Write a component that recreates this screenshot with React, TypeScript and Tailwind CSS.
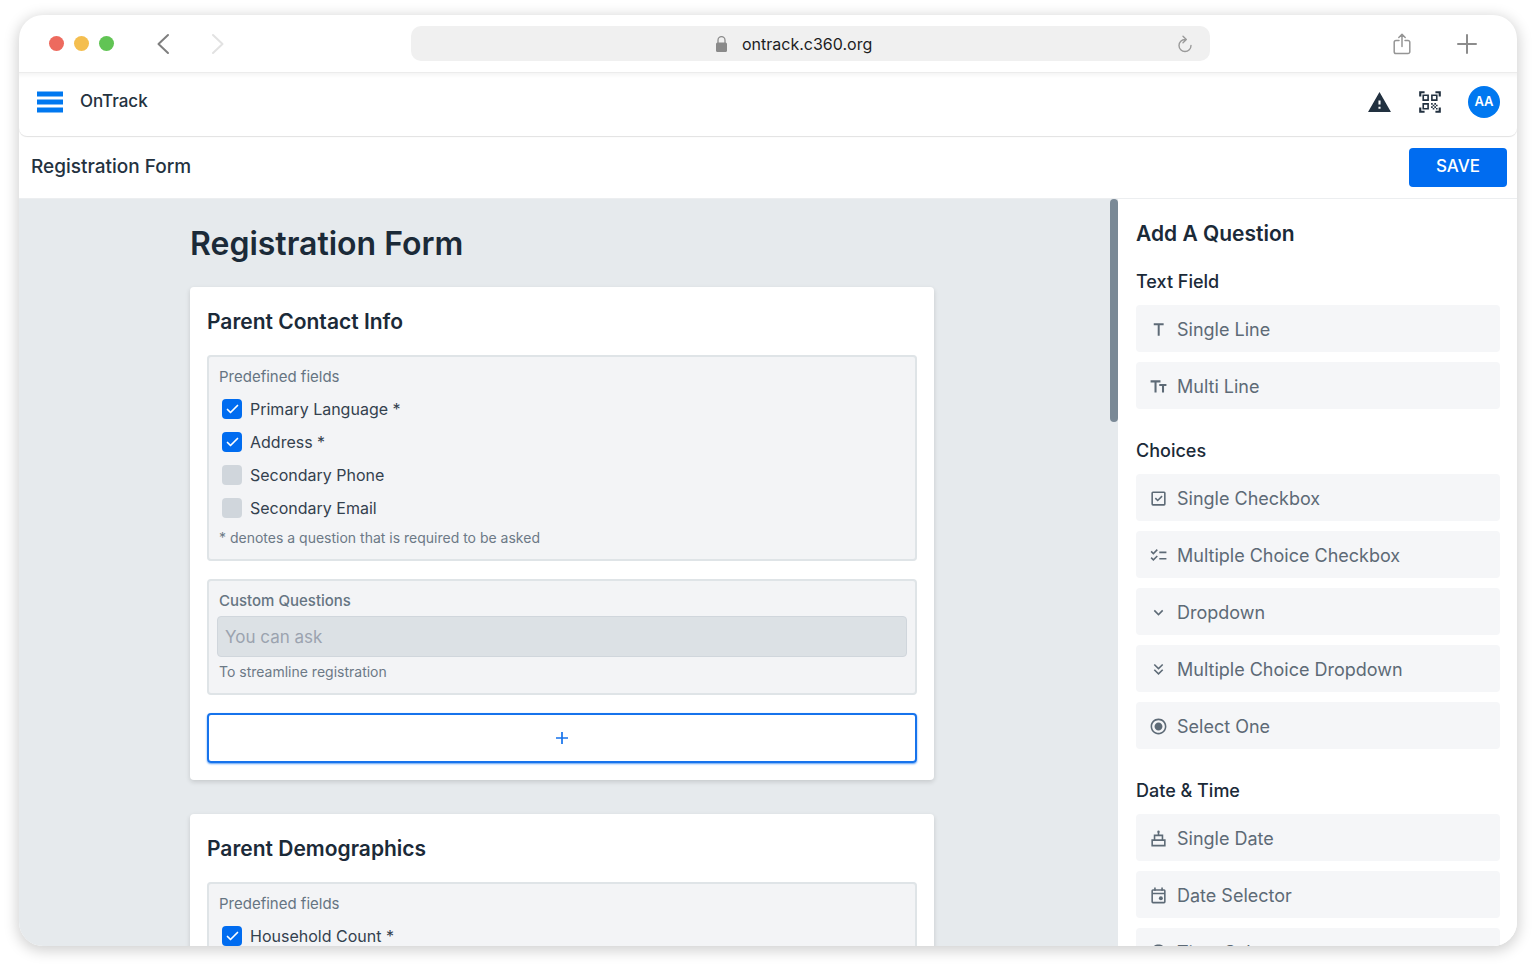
import React, { useState } from 'react';
import {
  MdAccessTime,
  MdChecklist,
  MdExpandMore,
  MdKeyboardDoubleArrowDown,
  MdOutlineQrCodeScanner,
  MdRadioButtonChecked,
  MdWarning,
} from 'react-icons/md';

type IconProps = { className?: string };

const TextIcon: React.FC<IconProps> = ({ className }) => (
  <svg viewBox="0 0 24 24" fill="none" stroke="currentColor" strokeWidth="2.500" className={className} aria-hidden="true">
    <path d="M6 5.500h12.500M12.250 5.500V20" />
  </svg>
);

const TextSizeIcon: React.FC<IconProps> = ({ className }) => (
  <svg viewBox="0 0 24 24" fill="none" stroke="currentColor" strokeWidth="2.600" className={className} aria-hidden="true">
    <path d="M2 5.500h12.500M8.250 5.500V19.500M13 10.200h9M17.700 10.200v9.300" />
  </svg>
);

const CheckboxIcon: React.FC<IconProps> = ({ className }) => (
  <svg viewBox="0 0 24 24" fill="none" stroke="currentColor" strokeWidth="2" className={className} aria-hidden="true">
    <rect x="4" y="4" width="16" height="16" rx="1" />
    <path d="M8 11.500l3 3 5.500-5.500" />
  </svg>
);

const CakeIcon: React.FC<IconProps> = ({ className }) => (
  <svg viewBox="0 0 24 24" fill="none" stroke="currentColor" strokeWidth="2" className={className} aria-hidden="true">
    <path d="M12 3v5M7 14V8h10v6M4 21v-7h16v7z" />
    <circle cx="12" cy="3.500" r="1.500" fill="currentColor" stroke="none" />
  </svg>
);

const CalendarIcon: React.FC<IconProps> = ({ className }) => (
  <svg viewBox="0 0 24 24" fill="none" stroke="currentColor" strokeWidth="2" className={className} aria-hidden="true">
    <rect x="4" y="5" width="16" height="16" rx="1" />
    <path d="M4 9.500h16M7.500 2v4M16.500 2v4" />
    <circle cx="15" cy="15.500" r="2.500" fill="currentColor" stroke="none" />
  </svg>
);

interface Field {
  label: string;
  checked: boolean;
}

const contactFields: Field[] = [
  { label: 'Primary Language *', checked: true },
  { label: 'Address *', checked: true },
  { label: 'Secondary Phone', checked: false },
  { label: 'Secondary Email', checked: false },
];

const demographicFields: Field[] = [{ label: 'Household Count *', checked: true }];

const questionGroups = [
  {
    title: 'Text Field',
    items: [
      { label: 'Single Line', Icon: TextIcon },
      { label: 'Multi Line', Icon: TextSizeIcon },
    ],
  },
  {
    title: 'Choices',
    items: [
      { label: 'Single Checkbox', Icon: CheckboxIcon },
      { label: 'Multiple Choice Checkbox', Icon: MdChecklist },
      { label: 'Dropdown', Icon: MdExpandMore },
      { label: 'Multiple Choice Dropdown', Icon: MdKeyboardDoubleArrowDown },
      { label: 'Select One', Icon: MdRadioButtonChecked },
    ],
  },
  {
    title: 'Date & Time',
    items: [
      { label: 'Single Date', Icon: CakeIcon },
      { label: 'Date Selector', Icon: CalendarIcon },
      { label: 'Time Selector', Icon: MdAccessTime },
    ],
  },
];

const BrowserBar: React.FC = () => (
  <div className="flex h-[57px] shrink-0 items-center">
    <div className="flex w-[392px] shrink-0 items-center pl-[30px]">
      <div className="flex gap-[10px]">
        <span className="size-[15px] rounded-full bg-[#ed6a5e]" />
        <span className="size-[15px] rounded-full bg-[#f4be4f]" />
        <span className="size-[15px] rounded-full bg-[#61c454]" />
      </div>
      <button aria-label="Back" className="ml-[42px] text-[#7f7f7f]">
        <svg width="14" height="22" viewBox="0 0 14 22" fill="none" stroke="currentColor" strokeWidth="2" strokeLinecap="round" strokeLinejoin="round">
          <path d="M12 2L2.500 11l9.500 9" />
        </svg>
      </button>
      <button aria-label="Forward" className="ml-[41px] text-[#e2e2e2]">
        <svg width="14" height="22" viewBox="0 0 14 22" fill="none" stroke="currentColor" strokeWidth="2" strokeLinecap="round" strokeLinejoin="round">
          <path d="M2 2l9.500 9L2 20" />
        </svg>
      </button>
    </div>
    <div className="flex h-[35px] flex-1 items-center rounded-[10px] bg-[#f0f0f0] pr-[17px] pl-[304px]">
      <svg width="13" height="18" viewBox="0 0 13 18" className="shrink-0 text-[#8a8a8a]" aria-hidden="true">
        <rect x="1" y="7.500" width="11" height="9.500" rx="1.500" fill="currentColor" />
        <path d="M3 8.500V5.200a3.500 3.500 0 0 1 7 0v3.300" fill="none" stroke="currentColor" strokeWidth="1.300" />
      </svg>
      <input
        aria-label="Address"
        defaultValue="ontrack.c360.org"
        className="ml-[14px] min-w-0 flex-1 bg-transparent text-base text-[#1d1d1f] outline-none"
      />
      <button aria-label="Reload" className="text-[#9a9a9a]">
        <svg width="16" height="18" viewBox="0 0 16 18" fill="none" stroke="currentColor" strokeWidth="1.400" strokeLinecap="round" strokeLinejoin="round">
          <path d="M8.500 4.500H8a6 6 0 1 0 6 6M6 1.300l3.300 3.200L6 7.700" />
        </svg>
      </button>
    </div>
    <div className="flex w-[307px] shrink-0 items-center justify-end pr-[40px]">
      <button aria-label="Share" className="mr-[45px] text-[#959595]">
        <svg width="20" height="22" viewBox="0 0 20 22" fill="none" stroke="currentColor" strokeWidth="1.500" strokeLinecap="round" strokeLinejoin="round">
          <path d="M7 7.500H4A1.800 1.800 0 0 0 2.200 9.300v9.400A1.800 1.800 0 0 0 4 20.500h12a1.800 1.800 0 0 0 1.800-1.800V9.300A1.800 1.800 0 0 0 16 7.500h-3M10 13.500V1.500M6.800 4.500L10 1.300l3.200 3.200" />
        </svg>
      </button>
      <button aria-label="New tab" className="text-[#8c8c8c]">
        <svg width="20" height="20" viewBox="0 0 20 20" fill="none" stroke="currentColor" strokeWidth="2" strokeLinecap="round">
          <path d="M10 1v18M1 10h18" />
        </svg>
      </button>
    </div>
  </div>
);

const AppHeader: React.FC = () => (
  <header className="flex h-16 shrink-0 items-center rounded-b-lg border-t border-[#ececec] pr-[17px] pb-[5px] pl-[18px] shadow-[0_1px_1px_rgba(0,0,0,0.12),inset_0_5px_4px_-3px_rgba(0,0,0,0.05)]">
    <button aria-label="Menu" className="text-[#0078f0]">
      <svg width="26" height="22" viewBox="0 0 26 22" fill="currentColor">
        <path d="M0 .500h26v5H0zM0 8.500h26v5H0zM0 16.500h26v5H0z" />
      </svg>
    </button>
    <span className="ml-[17px] flex-1 text-[17px] font-medium text-[#24323f]">OnTrack</span>
    <button aria-label="Alerts" className="text-[#223140]">
      <MdWarning size={25} />
    </button>
    <button aria-label="Scan code" className="ml-[25px] text-[#223140]">
      <MdOutlineQrCodeScanner size={26} />
    </button>
    <button className="ml-[25px] size-8 rounded-full bg-[#0078f0] text-[13px] font-semibold text-white">AA</button>
  </header>
);

const CheckField: React.FC<{ field: Field }> = ({ field }) => (
  <label className="flex h-[33px] items-center gap-2 pl-[5px] text-base text-[#33414e]">
    <span className="grid">
      <input
        type="checkbox"
        defaultChecked={field.checked}
        className="peer col-start-1 row-start-1 size-5 appearance-none rounded bg-[#d0d6dc] checked:bg-[#006cf0]"
      />
      <svg
        viewBox="0 0 20 20"
        fill="none"
        stroke="currentColor"
        strokeWidth="1.700"
        strokeLinecap="round"
        strokeLinejoin="round"
        className="pointer-events-none col-start-1 row-start-1 hidden size-5 text-white peer-checked:block"
      >
        <path d="M5.500 10.500l3 3L15.500 6.500" />
      </svg>
    </span>
    {field.label}
  </label>
);

const PredefinedFields: React.FC<{ fields: Field[] }> = ({ fields }) => (
  <fieldset className="rounded border-2 border-[#dfe4e7] bg-[#f3f4f6] px-2 pt-[9px] pb-[10px]">
    <div className="px-[2px] text-[15px] leading-[22px] text-[#667482]">Predefined fields</div>
    <div className="mt-1 mb-[3px]">
      {fields.map((field) => (
        <CheckField key={field.label} field={field} />
      ))}
    </div>
    <p className="px-[2px] text-sm leading-[22px] text-[#6c7986]">
      * denotes a question that is required to be asked
    </p>
  </fieldset>
);

const FormCard: React.FC<{ title: string; fields: Field[] }> = ({ title, fields }) => {
  const [question, setQuestion] = useState('');

  return (
    <section className="rounded bg-white px-[17px] pt-[19px] pb-[17px] shadow-[0_2px_5px_rgba(0,0,0,0.14)]">
      <h2 className="mb-[17px] text-[21px] leading-8 font-semibold text-[#1b2a38]">{title}</h2>
      <PredefinedFields fields={fields} />

      {/* Custom questions */}
      <div className="mt-[18px] rounded border-2 border-[#dfe4e7] bg-[#f3f4f6] px-2 pt-[9px] pb-[10px]">
        <label className="block px-[2px] text-[15px] leading-[22px] font-medium text-[#667482]">
          Custom Questions
          <input
            value={question}
            onChange={(e) => setQuestion(e.target.value)}
            placeholder="You can ask"
            className="-mx-[2px] mt-1 block h-[41px] w-[calc(100%+4px)] rounded border border-[#d0d6dc] bg-[#dce1e5] px-[7px] text-[17px] font-normal placeholder:text-[#9ba3af]"
          />
        </label>
        <p className="mt-1 px-[2px] text-sm leading-[22px] text-[#6c7986]">To streamline registration</p>
      </div>

      <button
        aria-label="Add question"
        className="mt-[18px] flex h-[50px] w-full items-center justify-center rounded border-2 border-[#1673ec] text-[#1673ec] shadow-[0_1px_2px_#5b9ff5]"
      >
        <svg width="14" height="14" viewBox="0 0 14 14" fill="none" stroke="currentColor" strokeWidth="1.700">
          <path d="M7 1v12M1 7h12" />
        </svg>
      </button>
    </section>
  );
};

const QuestionPanel: React.FC = () => (
  <aside className="w-[399px] shrink-0 overflow-hidden bg-white pt-[19px] pr-[17px] pl-[18px]">
    <h2 className="mb-[18px] text-[21px] leading-8 font-semibold text-[#1b2a38]">Add A Question</h2>
    <div className="flex flex-col gap-7">
      {questionGroups.map((group) => (
        <section key={group.title}>
          <h3 className="mb-[9px] text-lg leading-7 font-medium text-[#1b2a38]">{group.title}</h3>
          <div className="flex flex-col gap-[10px]">
            {group.items.map(({ label, Icon }) => (
              <button
                key={label}
                className="flex h-[47px] items-center gap-[9px] rounded bg-[#f5f6f8] pt-[2px] pl-[13px] text-lg text-[#5d6a76]"
              >
                <Icon className="size-[19px]" />
                {label}
              </button>
            ))}
          </div>
        </section>
      ))}
    </div>
  </aside>
);

export default function App() {
  return (
    <div className="h-screen bg-white px-[19px] pt-[15px] pb-[19px] font-['Inter',sans-serif]">
      <div className="flex h-full flex-col overflow-hidden rounded-[24px] bg-white shadow-[0_3px_14px_2px_rgba(0,0,0,0.18)]">
        <BrowserBar />
        <AppHeader />

        {/* Page toolbar */}
        <div className="flex h-[63px] shrink-0 items-center justify-between border-b border-[#eceef0] pr-[10px] pl-3">
          <h1 className="text-[19px] font-medium text-[#24323f]">Registration Form</h1>
          <button className="h-[39px] w-[98px] rounded bg-[#006cf0] text-[17px] font-medium text-white">SAVE</button>
        </div>

        <div className="flex min-h-0 flex-1">
          <main className="relative flex-1 overflow-hidden bg-[#e6eaed] pr-[13px]">
            <div className="mx-auto max-w-[744px] pt-[25px]">
              <h2 className="mb-[23px] text-[32px] leading-10 font-semibold text-[#1b2a38]">Registration Form</h2>
              <div className="flex flex-col gap-[34px]">
                <FormCard title="Parent Contact Info" fields={contactFields} />
                <FormCard title="Parent Demographics" fields={demographicFields} />
              </div>
            </div>
            {/* Scroll thumb */}
            <div className="absolute top-0 right-0 h-[223px] w-2 rounded-full bg-[#7a8996]" />
          </main>
          <QuestionPanel />
        </div>
      </div>
    </div>
  );
}
